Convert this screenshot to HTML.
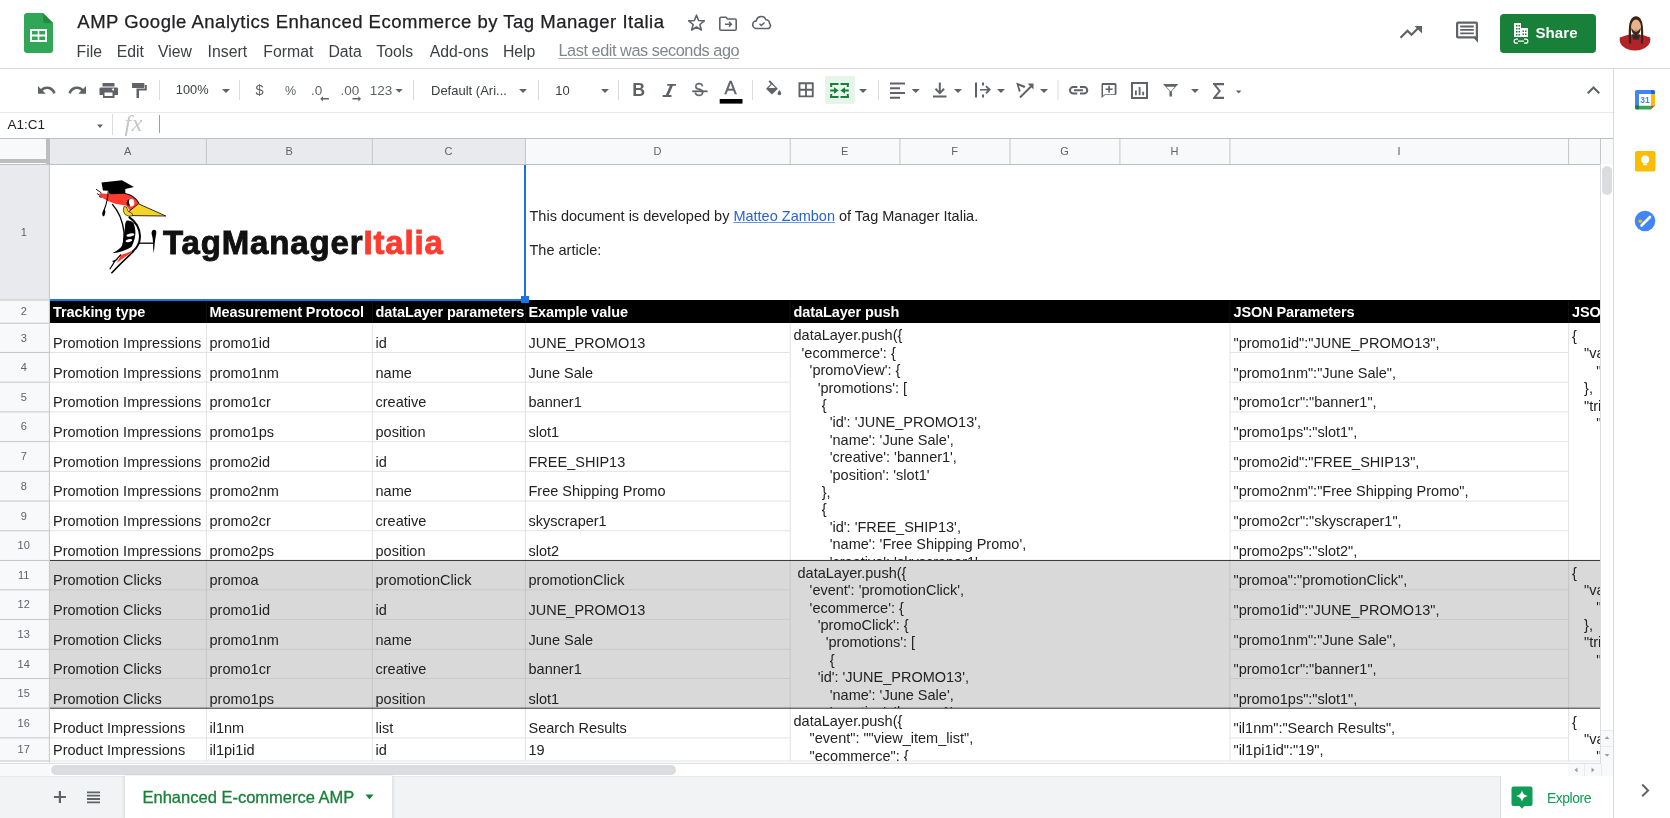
<!DOCTYPE html>
<html><head><meta charset="utf-8"><title>AMP Google Analytics Enhanced Ecommerce by Tag Manager Italia</title>
<style>
html,body{margin:0;padding:0}
body{width:1670px;height:818px;overflow:hidden;position:relative;background:#fff;font-family:"Liberation Sans",sans-serif}
.t{position:absolute;white-space:nowrap}
.c{}
</style></head><body>
<div style="position:absolute;left:0;top:0;width:1670px;height:818px;background:#fff;will-change:transform;overflow:hidden">
<svg style="position:absolute;left:24px;top:13px" width="29" height="40" viewBox="0 0 29 40">
<path d="M3 0H19L29 10V37A3 3 0 0 1 26 40H3A3 3 0 0 1 0 37V3A3 3 0 0 1 3 0Z" fill="#2fa756"/>
<path d="M19 0L29 10H21.5A2.5 2.5 0 0 1 19 7.5Z" fill="#1e8e3e"/>
<path d="M6 16H23V29H6Z" fill="#fff"/>
<path d="M8 18H13.7V21.5H8ZM15.3 18H21V21.5H15.3ZM8 23.5H13.7V27H8ZM15.3 23.5H21V27H15.3Z" fill="#2fa756"/>
</svg>
<div class="t" style="left:77.3px;top:12.84px;font-size:18.5px;line-height:18.5px;color:#202124;letter-spacing:0.5px;-webkit-text-stroke:0.25px #202124">AMP Google Analytics Enhanced Ecommerce by Tag Manager Italia</div>
<svg style="position:absolute;left:686px;top:12px" width="90" height="22" viewBox="0 0 90 22">
<path d="M10.5 3.2l2.1 5.3 5.7.4-4.4 3.6 1.4 5.5-4.8-3-4.8 3 1.4-5.5-4.4-3.6 5.7-.4z" fill="none" stroke="#5f6368" stroke-width="1.6" stroke-linejoin="round"/>
<path d="M35 5.2h5l1.6 1.8h7.4a1.2 1.2 0 0 1 1.2 1.2v8.8a1.2 1.2 0 0 1-1.2 1.2H35a1.2 1.2 0 0 1-1.2-1.2V6.4A1.2 1.2 0 0 1 35 5.2z" fill="none" stroke="#5f6368" stroke-width="1.6"/>
<path d="M39 12.2h6M43 9.8l2.4 2.4-2.4 2.4" fill="none" stroke="#5f6368" stroke-width="1.5"/>
<path d="M72.5 16.5h-1.8a3.8 3.8 0 0 1-.4-7.6 5 5 0 0 1 9.6-1.2 3.5 3.5 0 0 1 3.6 3.6 3.3 3.3 0 0 1-0.8 5.2z" fill="none" stroke="#5f6368" stroke-width="1.6" stroke-linejoin="round"/>
<path d="M73.5 11.8l1.8 1.8 3.2-3.2" fill="none" stroke="#5f6368" stroke-width="1.4"/>
</svg>
<div class="t" style="left:76.60000000000001px;top:43.63px;font-size:15.8px;line-height:15.8px;color:#3c4043">File</div>
<div class="t" style="left:116.7px;top:43.63px;font-size:15.8px;line-height:15.8px;color:#3c4043">Edit</div>
<div class="t" style="left:157.9px;top:43.63px;font-size:15.8px;line-height:15.8px;color:#3c4043">View</div>
<div class="t" style="left:207.6px;top:43.63px;font-size:15.8px;line-height:15.8px;color:#3c4043">Insert</div>
<div class="t" style="left:263.29999999999995px;top:43.63px;font-size:15.8px;line-height:15.8px;color:#3c4043">Format</div>
<div class="t" style="left:328.4px;top:43.63px;font-size:15.8px;line-height:15.8px;color:#3c4043">Data</div>
<div class="t" style="left:376.29999999999995px;top:43.63px;font-size:15.8px;line-height:15.8px;color:#3c4043">Tools</div>
<div class="t" style="left:429.7px;top:43.63px;font-size:15.8px;line-height:15.8px;color:#3c4043">Add-ons</div>
<div class="t" style="left:502.9px;top:43.63px;font-size:15.8px;line-height:15.8px;color:#3c4043">Help</div>
<div class="t" style="left:558.5px;top:42.20px;font-size:16.3px;line-height:16.3px;color:#80868b;letter-spacing:-0.45px;text-decoration:underline;text-decoration-color:#a9acb0;text-underline-offset:1.5px">Last edit was seconds ago</div>
<svg style="position:absolute;left:1396px;top:18px" width="90" height="28" viewBox="0 0 90 28">
<path d="M4.5 19.8l7-7 4 4 7-7" fill="none" stroke="#5f6368" stroke-width="2.2"/>
<path d="M18.5 8h7.5v7.5z" fill="#5f6368"/>
<path d="M62 3.5h18a2 2 0 0 1 2 2v19.3l-4-4.3H62a2 2 0 0 1-2-2v-13a2 2 0 0 1 2-2zM62.2 5.7v12.6h17.6V5.7z" fill="#5f6368" fill-rule="evenodd"/>
<path d="M64.2 8.5h13.6M64.2 11.9h13.6M64.2 15.3h13.6" stroke="#5f6368" stroke-width="1.8"/>
</svg>
<div style="position:absolute;left:1500px;top:14px;width:96px;height:39px;border-radius:4px;background:#188038"></div>
<svg style="position:absolute;left:1512px;top:22px" width="18" height="22" viewBox="0 0 18 22">
<path d="M2 1h7v5h7v9H2z" fill="#fff"/>
<path d="M4 3h1.5v1.5H4zM6.5 3H8v1.5H6.5zM4 6h1.5v1.5H4zM6.5 6H8v1.5H6.5zM4 9h1.5v1.5H4zM6.5 9H8v1.5H6.5zM10.5 8.5H12V10h-1.5zM13 8.5h1.5V10H13zM4 12h1.5v1.5H4zM6.5 12H8v1.5H6.5zM10.5 11.5H12V13h-1.5zM13 11.5h1.5V13H13z" fill="#188038"/>
<path d="M6 17.2H4.2a2 2 0 0 0 0 4H6M12 17.2h1.8a2 2 0 0 1 0 4H12M6 19.2h6" fill="none" stroke="#fff" stroke-width="1.3"/>
</svg>
<div class="t" style="left:1535.5px;top:24.80px;font-size:15px;line-height:15px;color:#fff;font-weight:bold;letter-spacing:0.1px">Share</div>
<svg style="position:absolute;left:1618px;top:16px" width="35" height="36" viewBox="0 0 35 36">
<path d="M1.8 21.5Q17 15 32.2 21.5Q33 26 30 29.5Q25 34.5 17 34.5Q9 34.5 4 29.5Q1 26 1.8 21.5z" fill="#b22226"/>
<path d="M14 18.5h8l-1.2 5h-5.6z" fill="#2b2b35"/>
<path d="M11 27.5Q10.2 14 11.5 7Q13.5 0 18 0.2Q22.5 0 24.3 7Q25.7 14 25 27.5L22.8 27.5Q23.5 16 22.5 10H13.5Q12.5 16 13.3 27.5z" fill="#3b2414"/>
<ellipse cx="18" cy="10.6" rx="4.9" ry="7" fill="#e6b38c"/>
<path d="M13.2 11.5Q13.6 18.8 18 19.2Q22.4 18.8 22.8 11.5Q21 15.2 18 15.2Q15 15.2 13.2 11.5z" fill="#3a2a1e"/>
<ellipse cx="18" cy="14.6" rx="2.1" ry="1.1" fill="#c98b7a"/>
</svg>
<div style="position:absolute;left:0;top:68px;width:1670px;height:1px;background:#dadce0"></div>
<svg style="position:absolute;left:0;top:69px" width="1613" height="43" viewBox="0 69 1613 43">
<g fill="#5f6368">
<!-- undo -->
<path d="M38 86v7.7h7.7l-2.9-2.9a6.2 6.2 0 0 1 10.3 2.9l2.5-.8a8.8 8.8 0 0 0-14.7-3.9z"/>
<!-- redo -->
<path d="M86 86v7.7h-7.7l2.9-2.9a6.2 6.2 0 0 0-10.3 2.9l-2.5-.8a8.8 8.8 0 0 1 14.7-3.9z"/>
<!-- print -->
<path d="M102.5 83h12v3.5h-12zM99.5 87.5h17.5a1 1 0 0 1 1 1v6.5h-3.5v3h-11.5v-3h-3.5v-6.5a1 1 0 0 1 1-1zM104.5 92.5v3.5h8v-3.5zM114 89.5a1 1 0 1 0 0 .01z"/>
<!-- paint format -->
<path d="M132 83h11.5a1 1 0 0 1 1 1v3a1 1 0 0 1-1 1H132zM145 85h1.8v5.5h-7.8v7.5h-2.5v-9.5h8.5z"/>
<!-- 100% triangle etc -->
<path d="M222 89h8l-4 4z"/>
<path d="M395.5 89h7.2l-3.6 3.8z"/>
<path d="M519 89h8l-4 4z"/>
<path d="M601 89h8l-4 4z"/>
<path d="M859 89h8l-4 4z"/>
<path d="M911.6 89h8.2l-4.1 4z"/>
<path d="M954 89h8l-4 4z"/>
<path d="M997 89h8l-4 4z"/>
<path d="M1040 89h8l-4 4z"/>
<path d="M1191 89h8l-4 4z"/>
<path d="M1236 90.4h5.4l-2.7 3.1z"/>
<!-- fill -->
<path d="M771.95 82.8l5.9 5.9-5.9 5.9-5.9-5.9z"/>
<path d="M769.2 81l3.2 3.2" stroke="#5f6368" stroke-width="1.9"/>
<path d="M768.5 88.1h6.9l-3.45-3.5z" fill="#fff"/>
<path d="M779.4 90.1q1.8 2.4 1.8 3.3a1.8 1.8 0 0 1-3.6 0q0-.9 1.8-3.3z"/>
<!-- borders -->
<path d="M798.5 82.3h15.2v15H798.5zM800.4 84.2v4.6h4.7v-4.6zM806.9 84.2v4.6h4.9v-4.6zM800.4 90.7v4.7h4.7v-4.7zM806.9 90.7v4.7h4.9v-4.7z" fill-rule="evenodd"/>
<!-- align left -->
<path d="M890 82.5h15v2h-15zM890 87.3h10v2h-10zM890 92.1h15v2h-15zM890 96.8h10v2h-10z"/>
<!-- valign bottom -->
<path d="M933 95.5h13.5v2H933zM938.8 82.5h2v8.2l2.6-2.6 1.4 1.4-5 5-5-5 1.4-1.4 2.6 2.6z"/>
<!-- wrap -->
<path d="M975 82.5h2v15h-2zM982 82.5h2v3h-2zM982 94.5h2v3h-2zM980 89h7.5l-2.2-2.2 1.3-1.3 4.3 4.3-4.3 4.3-1.3-1.3 2.2-2.2H980z"/>
<!-- rotate -->
<path d="M1016.2 82.5l9.2 3.6-1 1.8-5.6-2.1 1.9 5.3-1.8.9z"/>
<path d="M1020 97.5l11.5-11.5" stroke="#5f6368" stroke-width="2"/><path d="M1027.5 83.5h6v6z"/>
<!-- link -->
<path d="M1069 90.2a4.3 4.3 0 0 1 4.3-4.3h4v2h-4a2.3 2.3 0 0 0 0 4.6h4v2h-4a4.3 4.3 0 0 1-4.3-4.3zM1074 89.2h9v2h-9zM1080 85.9h4a4.3 4.3 0 0 1 0 8.6h-4v-2h4a2.3 2.3 0 0 0 0-4.6h-4z"/>
<!-- comment add -->
<path d="M1102.5 83h12.5a1.5 1.5 0 0 1 1.5 1.5v9a1.5 1.5 0 0 1-1.5 1.5h-10l-3.5 3.2V84.5a1.5 1.5 0 0 1 1-1.5zM1103 85v10.8l1.7-1.5h10V85z" fill-rule="evenodd"/>
<path d="M1108.3 85.8h1.6v2.7h2.7v1.6h-2.7v2.7h-1.6v-2.7h-2.7v-1.6h2.7z"/>
<!-- chart -->
<path d="M1131 82h17v17h-17zM1133 84v13h13V84z" fill-rule="evenodd"/>
<path d="M1135 90.5h1.8v4.7H1135zM1138.7 87h1.8v8.2h-1.8zM1142.3 91.8h1.8v3.4h-1.8z"/>
<!-- filter -->
<path d="M1163 84h15.3l-6.4 7v5.5h-2.4v-5.5z"/>
<path d="M1166.4 86.8h8.5l-4.25 4.6z" fill="#fff"/>
<!-- sigma -->
<path d="M1213 83h11v2.2h-7.8l4.8 5.8-4.8 5.8h7.8V99h-11v-1.2l5.5-6.8-5.5-6.8z"/>
<!-- chevron up -->
<path d="M1587 92.5l6.5-6.5 6.5 6.5-1.5 1.5-5-5-5 5z"/>
<!-- separators -->
</g>
<g fill="#dadce0">
<rect x="159" y="80" width="1" height="20"/><rect x="239" y="80" width="1" height="20"/><rect x="413" y="80" width="1" height="20"/>
<rect x="538" y="80" width="1" height="20"/><rect x="618" y="80" width="1" height="20"/><rect x="752" y="80" width="1" height="20"/>
<rect x="878" y="80" width="1" height="20"/><rect x="1057.5" y="80" width="1" height="20"/>
</g>
<!-- text color bar -->
<rect x="719.7" y="99" width="22.8" height="4.6" fill="#000"/>
<!-- merge highlighted -->
<rect x="825" y="76" width="30" height="28" rx="2" fill="#e6f4ea"/>
<g fill="#188038">
<rect x="830.2" y="83" width="8.3" height="2"/><rect x="830.2" y="83" width="2" height="4"/>
<rect x="840.5" y="83" width="8.3" height="2"/><rect x="846.8" y="83" width="2" height="4"/>
<rect x="830.2" y="96" width="8.3" height="2"/><rect x="830.2" y="94" width="2" height="4"/>
<rect x="840.5" y="96" width="8.3" height="2"/><rect x="846.8" y="94" width="2" height="4"/>
<rect x="830.2" y="89.5" width="4.5" height="2"/><path d="M834 87.2l4.6 3.3-4.6 3.3z"/>
<rect x="844.3" y="89.5" width="4.5" height="2"/><path d="M845 87.2l-4.6 3.3 4.6 3.3z"/>
</g>
</svg>
<div class="t" style="left:175.8px;top:83.86px;font-size:12.8px;line-height:12.8px;color:#3c4043">100%</div>
<div class="t" style="left:255.5px;top:82.93px;font-size:14.5px;line-height:14.5px;color:#5f6368">$</div>
<div class="t" style="left:285px;top:84.62px;font-size:12.5px;line-height:12.5px;color:#5f6368">%</div>
<div class="t" style="left:311px;top:83.77px;font-size:13.5px;line-height:13.5px;color:#5f6368">.0</div>
<div class="t" style="left:340.5px;top:83.77px;font-size:13.5px;line-height:13.5px;color:#5f6368">.00</div>
<svg style="position:absolute;left:310px;top:95px" width="55" height="7" viewBox="310 95 55 7"><g fill="#5f6368">
<path d="M320.3 98.8l2.6-2.6v1.8h6v1.6h-6v1.8z"/><path d="M361 98.8l-2.6-2.6v1.8h-6v1.6h6v1.8z"/></g></svg>
<div class="t" style="left:369.7px;top:83.57px;font-size:13.5px;line-height:13.5px;color:#5f6368">123</div>
<div class="t" style="left:431px;top:84.00px;font-size:13px;line-height:13px;color:#3c4043">Default (Ari...</div>
<div class="t" style="left:555.2px;top:84.00px;font-size:13px;line-height:13px;color:#3c4043">10</div>
<div class="t" style="left:632.2px;top:81.73px;font-size:17.8px;line-height:17.8px;color:#5f6368;font-weight:bold">B</div>
<svg style="position:absolute;left:655px;top:78px" width="90" height="28" viewBox="655 78 90 28"><g fill="#5f6368">
<path d="M667.2 83.9h8.8v1.9h-3.1l-4.1 9.3h2.7V97h-8.8v-1.9h3.1l4.1-9.3h-2.7z"/>
<rect x="692.2" y="90.4" width="15.4" height="1.8"/>
</g></svg>
<div class="t" style="left:694.2px;top:82.49px;font-size:17.5px;line-height:17.5px;color:#5f6368;transform:scaleX(0.86);transform-origin:0 0;-webkit-text-stroke:0.3px #5f6368">S</div>
<div class="t" style="left:724.4px;top:78.89px;font-size:18.2px;line-height:18.2px;color:#5f6368;-webkit-text-stroke:0.35px #5f6368">A</div>
<div style="position:absolute;left:0;top:112px;width:1613px;height:1px;background:#e8eaed"></div>
<div class="t" style="left:7.5px;top:118.27px;font-size:13.5px;line-height:13.5px;color:#202124">A1:C1</div>
<svg style="position:absolute;left:97px;top:124px" width="7" height="5" viewBox="0 0 7 5"><path d="M0 0.5h6l-3 3.5z" fill="#5f6368"/></svg>
<div style="position:absolute;left:112px;top:114px;width:1px;height:21px;background:#dadce0"></div>
<div class="t" style="left:124.5px;top:111.18px;font-size:24px;line-height:24px;color:#c4c7c5;font-family:Liberation Serif;font-style:italic;letter-spacing:0.5px">fx</div>
<div style="position:absolute;left:158.5px;top:115px;width:1.2px;height:18px;background:#9aa0a6"></div>
<div id="grid" style="position:absolute;left:0;top:0;width:1670px;height:818px">
<div style="position:absolute;left:0;top:138px;width:1613px;height:1px;background:#c0c0c0"></div>
<div style="position:absolute;left:50px;top:139px;width:1551px;height:25px;background:#f8f9fa"></div>
<div style="position:absolute;left:50px;top:139px;width:475.5px;height:25px;background:#e8eaed"></div>
<div style="position:absolute;left:0;top:139px;width:46px;height:20px;background:#f8f9fa"></div>
<div style="position:absolute;left:0;top:159px;width:46px;height:4px;background:#bdbdbd"></div>
<div style="position:absolute;left:46px;top:138px;width:4px;height:26px;background:#bdbdbd"></div>
<div style="position:absolute;left:0;top:164px;width:1601px;height:1px;background:#c0c0c0"></div>
<div style="position:absolute;left:1601px;top:139px;width:12px;height:25px;background:#f8f9fa"></div>
<svg style="position:absolute;left:0;top:0" width="1613" height="170" viewBox="0 0 1613 170"><rect x="205.90" y="139" width="1" height="25" fill="#c4c7c5"/><rect x="371.80" y="139" width="1" height="25" fill="#c4c7c5"/><rect x="524.90" y="139" width="1" height="25" fill="#c4c7c5"/><rect x="789.70" y="139" width="1" height="25" fill="#c4c7c5"/><rect x="899.40" y="139" width="1" height="25" fill="#c4c7c5"/><rect x="1009.50" y="139" width="1" height="25" fill="#c4c7c5"/><rect x="1119.40" y="139" width="1" height="25" fill="#c4c7c5"/><rect x="1229.40" y="139" width="1" height="25" fill="#c4c7c5"/><rect x="1568.10" y="139" width="1" height="25" fill="#c4c7c5"/><rect x="1600.00" y="139" width="1" height="25" fill="#c4c7c5"/></svg>
<div class="t" style="left:107.60000000000001px;width:40px;text-align:center;top:146.09px;font-size:11px;line-height:11px;color:#5f6368">A</div>
<div class="t" style="left:269.05px;width:40px;text-align:center;top:146.09px;font-size:11px;line-height:11px;color:#5f6368">B</div>
<div class="t" style="left:428.55px;width:40px;text-align:center;top:146.09px;font-size:11px;line-height:11px;color:#5f6368">C</div>
<div class="t" style="left:637.5px;width:40px;text-align:center;top:146.09px;font-size:11px;line-height:11px;color:#5f6368">D</div>
<div class="t" style="left:824.75px;width:40px;text-align:center;top:146.09px;font-size:11px;line-height:11px;color:#5f6368">E</div>
<div class="t" style="left:934.6500000000001px;width:40px;text-align:center;top:146.09px;font-size:11px;line-height:11px;color:#5f6368">F</div>
<div class="t" style="left:1044.65px;width:40px;text-align:center;top:146.09px;font-size:11px;line-height:11px;color:#5f6368">G</div>
<div class="t" style="left:1154.6000000000001px;width:40px;text-align:center;top:146.09px;font-size:11px;line-height:11px;color:#5f6368">H</div>
<div class="t" style="left:1378.95px;width:40px;text-align:center;top:146.09px;font-size:11px;line-height:11px;color:#5f6368">I</div>
<div style="position:absolute;left:0;top:165px;width:49.5px;height:596.3px;background:#f8f9fa"></div>
<div style="position:absolute;left:0;top:165px;width:49.5px;height:135px;background:#e8eaed"></div>
<div class="t" style="left:-0.8px;width:49px;text-align:center;top:227.19px;font-size:11px;line-height:11px;color:#5f6368">1</div>
<div class="t" style="left:-0.8px;width:49px;text-align:center;top:306.29px;font-size:11px;line-height:11px;color:#5f6368">2</div>
<div class="t" style="left:-0.8px;width:49px;text-align:center;top:332.51px;font-size:11px;line-height:11px;color:#5f6368">3</div>
<div class="t" style="left:-0.8px;width:49px;text-align:center;top:362.00px;font-size:11px;line-height:11px;color:#5f6368">4</div>
<div class="t" style="left:-0.8px;width:49px;text-align:center;top:391.72px;font-size:11px;line-height:11px;color:#5f6368">5</div>
<div class="t" style="left:-0.8px;width:49px;text-align:center;top:421.44px;font-size:11px;line-height:11px;color:#5f6368">6</div>
<div class="t" style="left:-0.8px;width:49px;text-align:center;top:451.16px;font-size:11px;line-height:11px;color:#5f6368">7</div>
<div class="t" style="left:-0.8px;width:49px;text-align:center;top:480.88px;font-size:11px;line-height:11px;color:#5f6368">8</div>
<div class="t" style="left:-0.8px;width:49px;text-align:center;top:510.60px;font-size:11px;line-height:11px;color:#5f6368">9</div>
<div class="t" style="left:-0.8px;width:49px;text-align:center;top:540.30px;font-size:11px;line-height:11px;color:#5f6368">10</div>
<div class="t" style="left:-0.8px;width:49px;text-align:center;top:569.81px;font-size:11px;line-height:11px;color:#5f6368">11</div>
<div class="t" style="left:-0.8px;width:49px;text-align:center;top:599.31px;font-size:11px;line-height:11px;color:#5f6368">12</div>
<div class="t" style="left:-0.8px;width:49px;text-align:center;top:629.06px;font-size:11px;line-height:11px;color:#5f6368">13</div>
<div class="t" style="left:-0.8px;width:49px;text-align:center;top:658.59px;font-size:11px;line-height:11px;color:#5f6368">14</div>
<div class="t" style="left:-0.8px;width:49px;text-align:center;top:688.04px;font-size:11px;line-height:11px;color:#5f6368">15</div>
<div class="t" style="left:-0.8px;width:49px;text-align:center;top:717.74px;font-size:11px;line-height:11px;color:#5f6368">16</div>
<div class="t" style="left:-0.8px;width:49px;text-align:center;top:744.14px;font-size:11px;line-height:11px;color:#5f6368">17</div>
<div style="position:absolute;left:50px;top:165px;width:1551px;height:596.3px;background:#fff"></div>
<div style="position:absolute;left:50px;top:300px;width:1550px;height:23px;background:#000"></div>
<div style="position:absolute;left:50px;top:561px;width:1550px;height:147px;background:#d9d9d9"></div>
<svg style="position:absolute;left:0;top:0" width="1613" height="818" viewBox="0 0 1613 818"><rect x="50" y="351.95" width="740.20" height="1" fill="#e2e3e3"/><rect x="1229.9" y="351.95" width="338.70" height="1" fill="#e2e3e3"/><rect x="50" y="381.67" width="740.20" height="1" fill="#e2e3e3"/><rect x="1229.9" y="381.67" width="338.70" height="1" fill="#e2e3e3"/><rect x="50" y="411.39" width="740.20" height="1" fill="#e2e3e3"/><rect x="1229.9" y="411.39" width="338.70" height="1" fill="#e2e3e3"/><rect x="50" y="441.11" width="740.20" height="1" fill="#e2e3e3"/><rect x="1229.9" y="441.11" width="338.70" height="1" fill="#e2e3e3"/><rect x="50" y="470.83" width="740.20" height="1" fill="#e2e3e3"/><rect x="1229.9" y="470.83" width="338.70" height="1" fill="#e2e3e3"/><rect x="50" y="500.55" width="740.20" height="1" fill="#e2e3e3"/><rect x="1229.9" y="500.55" width="338.70" height="1" fill="#e2e3e3"/><rect x="50" y="530.27" width="740.20" height="1" fill="#e2e3e3"/><rect x="1229.9" y="530.27" width="338.70" height="1" fill="#e2e3e3"/><rect x="50" y="589.30" width="740.20" height="1" fill="#c9c9c9"/><rect x="1229.9" y="589.30" width="338.70" height="1" fill="#c9c9c9"/><rect x="50" y="618.95" width="740.20" height="1" fill="#c9c9c9"/><rect x="1229.9" y="618.95" width="338.70" height="1" fill="#c9c9c9"/><rect x="50" y="648.80" width="740.20" height="1" fill="#c9c9c9"/><rect x="1229.9" y="648.80" width="338.70" height="1" fill="#c9c9c9"/><rect x="50" y="678.00" width="740.20" height="1" fill="#c9c9c9"/><rect x="1229.9" y="678.00" width="338.70" height="1" fill="#c9c9c9"/><rect x="50" y="737.40" width="740.20" height="1" fill="#e2e3e3"/><rect x="1229.9" y="737.40" width="338.70" height="1" fill="#e2e3e3"/><rect x="50" y="760.5" width="1551" height="1" fill="#e2e3e3"/><rect x="205.90" y="323.2" width="1" height="237.25" fill="#e2e3e3"/><rect x="205.90" y="560.45" width="1" height="147.75" fill="#c6c6c6"/><rect x="205.90" y="708.2" width="1" height="52.80" fill="#e2e3e3"/><rect x="205.90" y="301" width="1" height="22" fill="#111"/><rect x="371.80" y="323.2" width="1" height="237.25" fill="#e2e3e3"/><rect x="371.80" y="560.45" width="1" height="147.75" fill="#c6c6c6"/><rect x="371.80" y="708.2" width="1" height="52.80" fill="#e2e3e3"/><rect x="371.80" y="301" width="1" height="22" fill="#111"/><rect x="524.90" y="323.2" width="1" height="237.25" fill="#e2e3e3"/><rect x="524.90" y="560.45" width="1" height="147.75" fill="#c6c6c6"/><rect x="524.90" y="708.2" width="1" height="52.80" fill="#e2e3e3"/><rect x="524.90" y="301" width="1" height="22" fill="#111"/><rect x="789.70" y="323.2" width="1" height="237.25" fill="#e2e3e3"/><rect x="789.70" y="560.45" width="1" height="147.75" fill="#c6c6c6"/><rect x="789.70" y="708.2" width="1" height="52.80" fill="#e2e3e3"/><rect x="789.70" y="301" width="1" height="22" fill="#111"/><rect x="1229.40" y="323.2" width="1" height="237.25" fill="#e2e3e3"/><rect x="1229.40" y="560.45" width="1" height="147.75" fill="#c6c6c6"/><rect x="1229.40" y="708.2" width="1" height="52.80" fill="#e2e3e3"/><rect x="1229.40" y="301" width="1" height="22" fill="#111"/><rect x="1568.10" y="323.2" width="1" height="237.25" fill="#e2e3e3"/><rect x="1568.10" y="560.45" width="1" height="147.75" fill="#c6c6c6"/><rect x="1568.10" y="708.2" width="1" height="52.80" fill="#e2e3e3"/><rect x="1568.10" y="301" width="1" height="22" fill="#111"/><rect x="50" y="559.95" width="1550" height="1" fill="#333"/><rect x="50" y="707.7" width="1550" height="1" fill="#333"/><rect x="0" y="299.50" width="49.4" height="1" fill="#c4c7c5"/><rect x="0" y="322.70" width="49.4" height="1" fill="#c4c7c5"/><rect x="0" y="351.95" width="49.4" height="1" fill="#c4c7c5"/><rect x="0" y="381.67" width="49.4" height="1" fill="#c4c7c5"/><rect x="0" y="411.39" width="49.4" height="1" fill="#c4c7c5"/><rect x="0" y="441.11" width="49.4" height="1" fill="#c4c7c5"/><rect x="0" y="470.83" width="49.4" height="1" fill="#c4c7c5"/><rect x="0" y="500.55" width="49.4" height="1" fill="#c4c7c5"/><rect x="0" y="530.27" width="49.4" height="1" fill="#c4c7c5"/><rect x="0" y="559.95" width="49.4" height="1" fill="#c4c7c5"/><rect x="0" y="589.30" width="49.4" height="1" fill="#c4c7c5"/><rect x="0" y="618.95" width="49.4" height="1" fill="#c4c7c5"/><rect x="0" y="648.80" width="49.4" height="1" fill="#c4c7c5"/><rect x="0" y="678.00" width="49.4" height="1" fill="#c4c7c5"/><rect x="0" y="707.70" width="49.4" height="1" fill="#c4c7c5"/><rect x="0" y="737.40" width="49.4" height="1" fill="#c4c7c5"/><rect x="0" y="760.50" width="49.4" height="1" fill="#c4c7c5"/><rect x="48.9" y="164.5" width="1" height="598" fill="#c4c7c5"/><rect x="0" y="762.85" width="1613" height="1" fill="#dadce0"/></svg>
<div style="position:absolute;left:50px;top:301px;width:156.5px;height:22px;overflow:hidden"><div class="t c" style="left:3.0px;top:4.13px;font-size:14.5px;line-height:14.5px;color:#fff;font-weight:bold;white-space:pre;letter-spacing:-0.1px">Tracking type</div></div>
<div style="position:absolute;left:206.5px;top:301px;width:166.0px;height:22px;overflow:hidden"><div class="t c" style="left:3.0px;top:4.13px;font-size:14.5px;line-height:14.5px;color:#fff;font-weight:bold;white-space:pre;letter-spacing:-0.1px">Measurement Protocol</div></div>
<div style="position:absolute;left:372.5px;top:301px;width:153.0px;height:22px;overflow:hidden"><div class="t c" style="left:3.0px;top:4.13px;font-size:14.5px;line-height:14.5px;color:#fff;font-weight:bold;white-space:pre;letter-spacing:-0.1px">dataLayer parameters</div></div>
<div style="position:absolute;left:525.5px;top:301px;width:265.0px;height:22px;overflow:hidden"><div class="t c" style="left:3.0px;top:4.13px;font-size:14.5px;line-height:14.5px;color:#fff;font-weight:bold;white-space:pre;letter-spacing:-0.1px">Example value</div></div>
<div style="position:absolute;left:790.5px;top:301px;width:442px;height:22px;overflow:hidden"><div class="t c" style="left:3.0px;top:4.13px;font-size:14.5px;line-height:14.5px;color:#fff;font-weight:bold;white-space:pre;letter-spacing:-0.1px">dataLayer push</div></div>
<div style="position:absolute;left:1230.5px;top:301px;width:338.5px;height:22px;overflow:hidden"><div class="t c" style="left:3.0px;top:4.13px;font-size:14.5px;line-height:14.5px;color:#fff;font-weight:bold;white-space:pre;letter-spacing:-0.1px">JSON Parameters</div></div>
<div style="position:absolute;left:1569px;top:301px;width:32px;height:22px;overflow:hidden"><div class="t c" style="left:3.0px;top:4.13px;font-size:14.5px;line-height:14.5px;color:#fff;font-weight:bold;white-space:pre;letter-spacing:-0.1px">JSO</div></div>
<div class="t c" style="left:53px;top:335.78px;font-size:14.5px;line-height:14.5px;color:#222;white-space:pre;">Promotion Impressions</div>
<div class="t c" style="left:209.5px;top:335.78px;font-size:14.5px;line-height:14.5px;color:#222;white-space:pre;">promo1id</div>
<div class="t c" style="left:375.5px;top:335.78px;font-size:14.5px;line-height:14.5px;color:#222;white-space:pre;">id</div>
<div class="t c" style="left:528.5px;top:335.78px;font-size:14.5px;line-height:14.5px;color:#222;white-space:pre;">JUNE_PROMO13</div>
<div class="t c" style="left:1233.5px;top:335.78px;font-size:14.5px;line-height:14.5px;color:#222;white-space:pre;">"promo1id":"JUNE_PROMO13",</div>
<div class="t c" style="left:53px;top:365.50px;font-size:14.5px;line-height:14.5px;color:#222;white-space:pre;">Promotion Impressions</div>
<div class="t c" style="left:209.5px;top:365.50px;font-size:14.5px;line-height:14.5px;color:#222;white-space:pre;">promo1nm</div>
<div class="t c" style="left:375.5px;top:365.50px;font-size:14.5px;line-height:14.5px;color:#222;white-space:pre;">name</div>
<div class="t c" style="left:528.5px;top:365.50px;font-size:14.5px;line-height:14.5px;color:#222;white-space:pre;">June Sale</div>
<div class="t c" style="left:1233.5px;top:365.50px;font-size:14.5px;line-height:14.5px;color:#222;white-space:pre;">"promo1nm":"June Sale",</div>
<div class="t c" style="left:53px;top:395.22px;font-size:14.5px;line-height:14.5px;color:#222;white-space:pre;">Promotion Impressions</div>
<div class="t c" style="left:209.5px;top:395.22px;font-size:14.5px;line-height:14.5px;color:#222;white-space:pre;">promo1cr</div>
<div class="t c" style="left:375.5px;top:395.22px;font-size:14.5px;line-height:14.5px;color:#222;white-space:pre;">creative</div>
<div class="t c" style="left:528.5px;top:395.22px;font-size:14.5px;line-height:14.5px;color:#222;white-space:pre;">banner1</div>
<div class="t c" style="left:1233.5px;top:395.22px;font-size:14.5px;line-height:14.5px;color:#222;white-space:pre;">"promo1cr":"banner1",</div>
<div class="t c" style="left:53px;top:424.94px;font-size:14.5px;line-height:14.5px;color:#222;white-space:pre;">Promotion Impressions</div>
<div class="t c" style="left:209.5px;top:424.94px;font-size:14.5px;line-height:14.5px;color:#222;white-space:pre;">promo1ps</div>
<div class="t c" style="left:375.5px;top:424.94px;font-size:14.5px;line-height:14.5px;color:#222;white-space:pre;">position</div>
<div class="t c" style="left:528.5px;top:424.94px;font-size:14.5px;line-height:14.5px;color:#222;white-space:pre;">slot1</div>
<div class="t c" style="left:1233.5px;top:424.94px;font-size:14.5px;line-height:14.5px;color:#222;white-space:pre;">"promo1ps":"slot1",</div>
<div class="t c" style="left:53px;top:454.66px;font-size:14.5px;line-height:14.5px;color:#222;white-space:pre;">Promotion Impressions</div>
<div class="t c" style="left:209.5px;top:454.66px;font-size:14.5px;line-height:14.5px;color:#222;white-space:pre;">promo2id</div>
<div class="t c" style="left:375.5px;top:454.66px;font-size:14.5px;line-height:14.5px;color:#222;white-space:pre;">id</div>
<div class="t c" style="left:528.5px;top:454.66px;font-size:14.5px;line-height:14.5px;color:#222;white-space:pre;">FREE_SHIP13</div>
<div class="t c" style="left:1233.5px;top:454.66px;font-size:14.5px;line-height:14.5px;color:#222;white-space:pre;">"promo2id":"FREE_SHIP13",</div>
<div class="t c" style="left:53px;top:484.38px;font-size:14.5px;line-height:14.5px;color:#222;white-space:pre;">Promotion Impressions</div>
<div class="t c" style="left:209.5px;top:484.38px;font-size:14.5px;line-height:14.5px;color:#222;white-space:pre;">promo2nm</div>
<div class="t c" style="left:375.5px;top:484.38px;font-size:14.5px;line-height:14.5px;color:#222;white-space:pre;">name</div>
<div class="t c" style="left:528.5px;top:484.38px;font-size:14.5px;line-height:14.5px;color:#222;white-space:pre;">Free Shipping Promo</div>
<div class="t c" style="left:1233.5px;top:484.38px;font-size:14.5px;line-height:14.5px;color:#222;white-space:pre;">"promo2nm":"Free Shipping Promo",</div>
<div class="t c" style="left:53px;top:514.10px;font-size:14.5px;line-height:14.5px;color:#222;white-space:pre;">Promotion Impressions</div>
<div class="t c" style="left:209.5px;top:514.10px;font-size:14.5px;line-height:14.5px;color:#222;white-space:pre;">promo2cr</div>
<div class="t c" style="left:375.5px;top:514.10px;font-size:14.5px;line-height:14.5px;color:#222;white-space:pre;">creative</div>
<div class="t c" style="left:528.5px;top:514.10px;font-size:14.5px;line-height:14.5px;color:#222;white-space:pre;">skyscraper1</div>
<div class="t c" style="left:1233.5px;top:514.10px;font-size:14.5px;line-height:14.5px;color:#222;white-space:pre;">"promo2cr":"skyscraper1",</div>
<div class="t c" style="left:53px;top:543.78px;font-size:14.5px;line-height:14.5px;color:#222;white-space:pre;">Promotion Impressions</div>
<div class="t c" style="left:209.5px;top:543.78px;font-size:14.5px;line-height:14.5px;color:#222;white-space:pre;">promo2ps</div>
<div class="t c" style="left:375.5px;top:543.78px;font-size:14.5px;line-height:14.5px;color:#222;white-space:pre;">position</div>
<div class="t c" style="left:528.5px;top:543.78px;font-size:14.5px;line-height:14.5px;color:#222;white-space:pre;">slot2</div>
<div class="t c" style="left:1233.5px;top:543.78px;font-size:14.5px;line-height:14.5px;color:#222;white-space:pre;">"promo2ps":"slot2",</div>
<div class="t c" style="left:53px;top:573.13px;font-size:14.5px;line-height:14.5px;color:#222;white-space:pre;">Promotion Clicks</div>
<div class="t c" style="left:209.5px;top:573.13px;font-size:14.5px;line-height:14.5px;color:#222;white-space:pre;">promoa</div>
<div class="t c" style="left:375.5px;top:573.13px;font-size:14.5px;line-height:14.5px;color:#222;white-space:pre;">promotionClick</div>
<div class="t c" style="left:528.5px;top:573.13px;font-size:14.5px;line-height:14.5px;color:#222;white-space:pre;">promotionClick</div>
<div class="t c" style="left:1233.5px;top:573.13px;font-size:14.5px;line-height:14.5px;color:#222;white-space:pre;">"promoa":"promotionClick",</div>
<div class="t c" style="left:53px;top:602.78px;font-size:14.5px;line-height:14.5px;color:#222;white-space:pre;">Promotion Clicks</div>
<div class="t c" style="left:209.5px;top:602.78px;font-size:14.5px;line-height:14.5px;color:#222;white-space:pre;">promo1id</div>
<div class="t c" style="left:375.5px;top:602.78px;font-size:14.5px;line-height:14.5px;color:#222;white-space:pre;">id</div>
<div class="t c" style="left:528.5px;top:602.78px;font-size:14.5px;line-height:14.5px;color:#222;white-space:pre;">JUNE_PROMO13</div>
<div class="t c" style="left:1233.5px;top:602.78px;font-size:14.5px;line-height:14.5px;color:#222;white-space:pre;">"promo1id":"JUNE_PROMO13",</div>
<div class="t c" style="left:53px;top:632.63px;font-size:14.5px;line-height:14.5px;color:#222;white-space:pre;">Promotion Clicks</div>
<div class="t c" style="left:209.5px;top:632.63px;font-size:14.5px;line-height:14.5px;color:#222;white-space:pre;">promo1nm</div>
<div class="t c" style="left:375.5px;top:632.63px;font-size:14.5px;line-height:14.5px;color:#222;white-space:pre;">name</div>
<div class="t c" style="left:528.5px;top:632.63px;font-size:14.5px;line-height:14.5px;color:#222;white-space:pre;">June Sale</div>
<div class="t c" style="left:1233.5px;top:632.63px;font-size:14.5px;line-height:14.5px;color:#222;white-space:pre;">"promo1nm":"June Sale",</div>
<div class="t c" style="left:53px;top:661.83px;font-size:14.5px;line-height:14.5px;color:#222;white-space:pre;">Promotion Clicks</div>
<div class="t c" style="left:209.5px;top:661.83px;font-size:14.5px;line-height:14.5px;color:#222;white-space:pre;">promo1cr</div>
<div class="t c" style="left:375.5px;top:661.83px;font-size:14.5px;line-height:14.5px;color:#222;white-space:pre;">creative</div>
<div class="t c" style="left:528.5px;top:661.83px;font-size:14.5px;line-height:14.5px;color:#222;white-space:pre;">banner1</div>
<div class="t c" style="left:1233.5px;top:661.83px;font-size:14.5px;line-height:14.5px;color:#222;white-space:pre;">"promo1cr":"banner1",</div>
<div class="t c" style="left:53px;top:691.53px;font-size:14.5px;line-height:14.5px;color:#222;white-space:pre;">Promotion Clicks</div>
<div class="t c" style="left:209.5px;top:691.53px;font-size:14.5px;line-height:14.5px;color:#222;white-space:pre;">promo1ps</div>
<div class="t c" style="left:375.5px;top:691.53px;font-size:14.5px;line-height:14.5px;color:#222;white-space:pre;">position</div>
<div class="t c" style="left:528.5px;top:691.53px;font-size:14.5px;line-height:14.5px;color:#222;white-space:pre;">slot1</div>
<div class="t c" style="left:1233.5px;top:691.53px;font-size:14.5px;line-height:14.5px;color:#222;white-space:pre;">"promo1ps":"slot1",</div>
<div class="t c" style="left:53px;top:721.23px;font-size:14.5px;line-height:14.5px;color:#222;white-space:pre;">Product Impressions</div>
<div class="t c" style="left:209.5px;top:721.23px;font-size:14.5px;line-height:14.5px;color:#222;white-space:pre;">il1nm</div>
<div class="t c" style="left:375.5px;top:721.23px;font-size:14.5px;line-height:14.5px;color:#222;white-space:pre;">list</div>
<div class="t c" style="left:528.5px;top:721.23px;font-size:14.5px;line-height:14.5px;color:#222;white-space:pre;">Search Results</div>
<div class="t c" style="left:1233.5px;top:721.23px;font-size:14.5px;line-height:14.5px;color:#222;white-space:pre;">"il1nm":"Search Results",</div>
<div class="t c" style="left:53px;top:742.73px;font-size:14.5px;line-height:14.5px;color:#222;white-space:pre;">Product Impressions</div>
<div class="t c" style="left:209.5px;top:742.73px;font-size:14.5px;line-height:14.5px;color:#222;white-space:pre;">il1pi1id</div>
<div class="t c" style="left:375.5px;top:742.73px;font-size:14.5px;line-height:14.5px;color:#222;white-space:pre;">id</div>
<div class="t c" style="left:528.5px;top:742.73px;font-size:14.5px;line-height:14.5px;color:#222;white-space:pre;">19</div>
<div class="t c" style="left:1233.5px;top:742.73px;font-size:14.5px;line-height:14.5px;color:#222;white-space:pre;">"il1pi1id":"19",</div>
<div style="position:absolute;left:790.5px;top:324px;width:439px;height:236px;overflow:hidden"><div class="t c" style="left:3px;top:4.33px;font-size:14.5px;line-height:14.5px;color:#222;white-space:pre">dataLayer.push({</div><div class="t c" style="left:3px;top:21.73px;font-size:14.5px;line-height:14.5px;color:#222;white-space:pre">  'ecommerce': {</div><div class="t c" style="left:3px;top:39.13px;font-size:14.5px;line-height:14.5px;color:#222;white-space:pre">    'promoView': {</div><div class="t c" style="left:3px;top:56.53px;font-size:14.5px;line-height:14.5px;color:#222;white-space:pre">      'promotions': [</div><div class="t c" style="left:3px;top:73.93px;font-size:14.5px;line-height:14.5px;color:#222;white-space:pre">       {</div><div class="t c" style="left:3px;top:91.33px;font-size:14.5px;line-height:14.5px;color:#222;white-space:pre">         'id': 'JUNE_PROMO13',</div><div class="t c" style="left:3px;top:108.73px;font-size:14.5px;line-height:14.5px;color:#222;white-space:pre">         'name': 'June Sale',</div><div class="t c" style="left:3px;top:126.13px;font-size:14.5px;line-height:14.5px;color:#222;white-space:pre">         'creative': 'banner1',</div><div class="t c" style="left:3px;top:143.53px;font-size:14.5px;line-height:14.5px;color:#222;white-space:pre">         'position': 'slot1'</div><div class="t c" style="left:3px;top:160.93px;font-size:14.5px;line-height:14.5px;color:#222;white-space:pre">       },</div><div class="t c" style="left:3px;top:178.33px;font-size:14.5px;line-height:14.5px;color:#222;white-space:pre">       {</div><div class="t c" style="left:3px;top:195.73px;font-size:14.5px;line-height:14.5px;color:#222;white-space:pre">         'id': 'FREE_SHIP13',</div><div class="t c" style="left:3px;top:213.13px;font-size:14.5px;line-height:14.5px;color:#222;white-space:pre">         'name': 'Free Shipping Promo',</div><div class="t c" style="left:3px;top:230.53px;font-size:14.5px;line-height:14.5px;color:#222;white-space:pre">         'creative': 'skyscraper1',</div></div>
<div style="position:absolute;left:790.5px;top:561.2px;width:439px;height:146.79999999999995px;overflow:hidden"><div class="t c" style="left:3px;top:4.53px;font-size:14.5px;line-height:14.5px;color:#222;white-space:pre"> dataLayer.push({</div><div class="t c" style="left:3px;top:21.93px;font-size:14.5px;line-height:14.5px;color:#222;white-space:pre">    'event': 'promotionClick',</div><div class="t c" style="left:3px;top:39.33px;font-size:14.5px;line-height:14.5px;color:#222;white-space:pre">    'ecommerce': {</div><div class="t c" style="left:3px;top:56.73px;font-size:14.5px;line-height:14.5px;color:#222;white-space:pre">      'promoClick': {</div><div class="t c" style="left:3px;top:74.13px;font-size:14.5px;line-height:14.5px;color:#222;white-space:pre">        'promotions': [</div><div class="t c" style="left:3px;top:91.53px;font-size:14.5px;line-height:14.5px;color:#222;white-space:pre">         {</div><div class="t c" style="left:3px;top:108.93px;font-size:14.5px;line-height:14.5px;color:#222;white-space:pre">      'id': 'JUNE_PROMO13',</div><div class="t c" style="left:3px;top:126.33px;font-size:14.5px;line-height:14.5px;color:#222;white-space:pre">         'name': 'June Sale',</div><div class="t c" style="left:3px;top:143.73px;font-size:14.5px;line-height:14.5px;color:#222;white-space:pre">         'creative': 'banner1',</div></div>
<div style="position:absolute;left:790.5px;top:709.2px;width:439px;height:51.799999999999955px;overflow:hidden"><div class="t c" style="left:3px;top:4.83px;font-size:14.5px;line-height:14.5px;color:#222;white-space:pre">dataLayer.push({</div><div class="t c" style="left:3px;top:22.23px;font-size:14.5px;line-height:14.5px;color:#222;white-space:pre">    "event": ""view_item_list",</div><div class="t c" style="left:3px;top:39.63px;font-size:14.5px;line-height:14.5px;color:#222;white-space:pre">    "ecommerce": {</div><div class="t c" style="left:3px;top:57.03px;font-size:14.5px;line-height:14.5px;color:#222;white-space:pre">      "items": [</div></div>
<div style="position:absolute;left:1569px;top:324px;width:31.5px;height:236px;overflow:hidden"><div class="t c" style="left:3px;top:4.93px;font-size:14.5px;line-height:14.5px;color:#222;white-space:pre">{</div><div class="t c" style="left:3px;top:22.33px;font-size:14.5px;line-height:14.5px;color:#222;white-space:pre">   "vars": {</div><div class="t c" style="left:3px;top:39.73px;font-size:14.5px;line-height:14.5px;color:#222;white-space:pre">      "event": "promotionView"</div><div class="t c" style="left:3px;top:57.13px;font-size:14.5px;line-height:14.5px;color:#222;white-space:pre">   },</div><div class="t c" style="left:3px;top:74.53px;font-size:14.5px;line-height:14.5px;color:#222;white-space:pre">   "triggers": {</div><div class="t c" style="left:3px;top:91.93px;font-size:14.5px;line-height:14.5px;color:#222;white-space:pre">      "promoView": {</div></div>
<div style="position:absolute;left:1569px;top:561.2px;width:31.5px;height:146.79999999999995px;overflow:hidden"><div class="t c" style="left:3px;top:4.33px;font-size:14.5px;line-height:14.5px;color:#222;white-space:pre">{</div><div class="t c" style="left:3px;top:21.73px;font-size:14.5px;line-height:14.5px;color:#222;white-space:pre">   "vars": {</div><div class="t c" style="left:3px;top:39.13px;font-size:14.5px;line-height:14.5px;color:#222;white-space:pre">      "event": "promotionView"</div><div class="t c" style="left:3px;top:56.53px;font-size:14.5px;line-height:14.5px;color:#222;white-space:pre">   },</div><div class="t c" style="left:3px;top:73.93px;font-size:14.5px;line-height:14.5px;color:#222;white-space:pre">   "triggers": {</div><div class="t c" style="left:3px;top:91.33px;font-size:14.5px;line-height:14.5px;color:#222;white-space:pre">      "promoView": {</div></div>
<div style="position:absolute;left:1569px;top:709.2px;width:31.5px;height:51.799999999999955px;overflow:hidden"><div class="t c" style="left:3px;top:5.43px;font-size:14.5px;line-height:14.5px;color:#222;white-space:pre">{</div><div class="t c" style="left:3px;top:22.83px;font-size:14.5px;line-height:14.5px;color:#222;white-space:pre">   "vars": {</div><div class="t c" style="left:3px;top:40.23px;font-size:14.5px;line-height:14.5px;color:#222;white-space:pre">      "event": "promotionView"</div><div class="t c" style="left:3px;top:57.63px;font-size:14.5px;line-height:14.5px;color:#222;white-space:pre">   },</div><div class="t c" style="left:3px;top:75.03px;font-size:14.5px;line-height:14.5px;color:#222;white-space:pre">   "triggers": {</div><div class="t c" style="left:3px;top:92.43px;font-size:14.5px;line-height:14.5px;color:#222;white-space:pre">      "promoView": {</div></div>
<div class="t c" style="left:529.5px;top:208.63px;font-size:14.5px;line-height:14.5px;color:#222;white-space:pre">This document is developed by <span style="color:#2563d4;text-decoration:underline;text-decoration-color:#6e97e3;text-underline-offset:1px">Matteo Zambon</span> of Tag Manager Italia.</div>
<div class="t c" style="left:529.5px;top:243.33px;font-size:14.5px;line-height:14.5px;color:#222;white-space:pre">The article:</div>
<div style="position:absolute;left:524px;top:165px;width:2px;height:136px;background:#1a73e8"></div>
<div style="position:absolute;left:50px;top:299px;width:476px;height:2px;background:#1a73e8"></div>
<div style="position:absolute;left:521px;top:295.5px;width:7.5px;height:7.5px;background:#1a73e8"></div>
</div>
<svg style="position:absolute;left:90px;top:175px" width="360" height="102" viewBox="90 175 360 102">
<!-- cap -->
<path d="M101.5 182.4L122 180.3 133.9 187 125.3 189.1 125.3 193.7 122.6 195.6 112.2 195.6 109.1 193.4 108.5 190.7 103 190.4z" fill="#000"/>
<!-- head red -->
<path d="M99.5 193.2L112 194.3 125 193.7Q134 195 139 203.5L131.5 212.5 126 205.5Q118 204.8 114.6 203.6Q108 201.8 100.6 196.8Z" fill="#ff3b2f"/>
<path d="M125 193.5Q134.5 195 139.2 203.6" stroke="#000" stroke-width="1.1" fill="none"/>
<!-- beak -->
<path d="M138.5 203.8L165.8 216 131 215.6 127 213z" fill="#f5d327" stroke="#000" stroke-width="0.8" stroke-linejoin="round"/>
<path d="M124 206.5Q122 211 125 214.5Q129 217.5 133 215.5L131.5 213Q127 212 126.5 207z" fill="#f5d327" stroke="#000" stroke-width="0.6"/>
<!-- eye -->
<ellipse cx="131.3" cy="202.8" rx="3" ry="3.8" fill="#fff"/>
<path d="M129.2 199Q126.2 201 126.6 204.2Q127.6 206.3 130.2 205.6Q128.2 203 129.2 199z" fill="#000"/>
<!-- tassel -->
<path d="M108.3 190.8Q107.5 202 104.3 209.5" stroke="#000" stroke-width="1.1" fill="none"/>
<path d="M104.2 208.2Q106.6 211.5 104 216.5Q100.3 215.5 104.2 208.2z" fill="#000"/>
<path d="M96 189.2L101.5 193M97 193.5L100.5 195.8M99 196.5L101.5 197.5" stroke="#000" stroke-width="0.9"/>
<!-- body outline left -->
<path d="M112.2 204.1Q122 215 124 232Q124.5 243 121.7 248.6" stroke="#000" stroke-width="1.4" fill="none"/>
<!-- body outline right -->
<path d="M128.8 216.8Q139.5 224 140 236Q140 246 132 252" stroke="#000" stroke-width="2" fill="none"/>
<!-- wing -->
<path d="M126.5 220.7Q131 220 133.6 223.1Q136 230 135.2 235.8Q134 243 131.2 247Q124 252 112.2 253.3Q120 249 122.5 245.4Q124 237 124.9 227.9Q125 222 126.5 220.7z" fill="#000"/>
<ellipse cx="130.4" cy="235" rx="4" ry="1.5" fill="#fff" transform="rotate(-10 130.4 235)"/>
<ellipse cx="128.9" cy="240.6" rx="3.3" ry="1.4" fill="#fff" transform="rotate(-15 128.9 240.6)"/>
<!-- red tail -->
<path d="M133.6 250.2Q126 253.5 120.9 254.9L116.9 262.9Q122 259 125.7 256.5Q130.5 253.5 133.6 250.2z" fill="#ff3b2f"/>
<path d="M134 251Q122 262 111.4 273.2" stroke="#000" stroke-width="1.6" fill="none"/>
<path d="M121 254.5Q114 261 109.8 269.2M117.5 259.5L112.5 261.5" stroke="#000" stroke-width="1.1" fill="none"/>
<!-- perch -->
<path d="M138.9 243.2H153.6" stroke="#000" stroke-width="1.3"/>
<path d="M154.3 229.8q2.2.3 2 3.5q-.8 4-1.6 10q-.3 5-1 10q-.8-5-.6-10q0-5-1.6-10q.2-3.5 2.8-3.5z" fill="#000"/>
<!-- text -->
<text x="163" y="254.2" font-family="Liberation Sans" font-weight="bold" font-size="33" letter-spacing="0.85" fill="#111" stroke="#111" stroke-width="0.9">TagManager<tspan fill="#ff3b2f" stroke="#ff3b2f">Italia</tspan></text>
</svg>
<div style="position:absolute;left:1601px;top:165px;width:12px;height:598px;background:#fff"></div>
<div style="position:absolute;left:1600px;top:164px;width:1px;height:612px;background:#dadce0"></div>
<div style="position:absolute;left:1602px;top:166px;width:10px;height:29px;border-radius:5px;background:#dadce0"></div>
<div style="position:absolute;left:1601px;top:729.5px;width:12px;height:33px;background:#f8f9fa;border-top:1px solid #e8eaed"></div>
<svg style="position:absolute;left:1601px;top:730px" width="12" height="33" viewBox="0 0 12 33"><path d="M3.5 9l2.5-2.8 2.5 2.8z" fill="#9aa0a6"/><path d="M3.5 24l2.5 2.8 2.5-2.8z" fill="#9aa0a6"/><rect x="0" y="16" width="12" height="1" fill="#e8eaed"/></svg>
<div style="position:absolute;left:50px;top:764px;width:1551px;height:12px;background:#fff"></div>
<div style="position:absolute;left:0;top:764px;width:49.5px;height:12px;background:#f8f9fa"></div>
<div style="position:absolute;left:51px;top:765px;width:625px;height:10px;border-radius:5px;background:#dadce0"></div>
<div style="position:absolute;left:1568px;top:764px;width:45px;height:12px;background:#f8f9fa"></div>
<svg style="position:absolute;left:1568px;top:764px" width="45" height="12" viewBox="0 0 45 12"><rect x="16" y="0" width="1" height="12" fill="#e8eaed"/><rect x="33" y="0" width="1" height="12" fill="#e8eaed"/><path d="M9.5 3.5l-3 2.5 3 2.5z" fill="#9aa0a6"/><path d="M23.5 3.5l3 2.5-3 2.5z" fill="#9aa0a6"/></svg>
<div style="position:absolute;left:0;top:776px;width:1613px;height:42px;background:#f1f3f4"></div>
<div style="position:absolute;left:0;top:775.5px;width:1613px;height:1px;background:#e8eaed"></div>
<svg style="position:absolute;left:50px;top:788px" width="60" height="18" viewBox="50 788 60 18"><g fill="#5f6368">
<path d="M58.8 791h2.2v4.9h4.9v2.2H61v4.9h-2.2v-4.9h-4.9v-2.2h4.9z"/>
<path d="M87 791.5h13v1.8H87zM87 794.8h13v1.8H87zM87 798.1h13v1.8H87zM87 801.4h13v1.8H87z"/>
</g></svg>
<div style="position:absolute;left:125px;top:776px;width:267px;height:42px;background:#fff;box-shadow:0 1px 3px 1px rgba(60,64,67,.15)"></div>
<div class="t" style="left:142.5px;top:788.63px;font-size:16.5px;line-height:16.5px;color:#188038;letter-spacing:0px;-webkit-text-stroke:0.3px #188038">Enhanced E-commerce AMP</div>
<svg style="position:absolute;left:365px;top:794px" width="9" height="6" viewBox="0 0 9 6"><path d="M0.5 0.5h8l-4 5z" fill="#188038"/></svg>
<div style="position:absolute;left:1499.5px;top:776px;width:113.5px;height:42px;background:#fff;border-left:1px solid #dadce0"></div>
<svg style="position:absolute;left:1511px;top:786px" width="22" height="23" viewBox="0 0 22 23">
<path d="M2.5 0.5h17a2 2 0 0 1 2 2v15.5a2 2 0 0 1-2 2h-6l-2.5 2.8-2.5-2.8h-6a2 2 0 0 1-2-2V2.5a2 2 0 0 1 2-2z" fill="#0f9d58"/>
<path d="M11 4.2q.8 4.8 5.8 5.8q-5 1-5.8 5.8q-.8-4.8-5.8-5.8q5-1 5.8-5.8z" fill="#fff"/>
</svg>
<div class="t" style="left:1547px;top:790.55px;font-size:14px;line-height:14px;color:#0f9d58;letter-spacing:-0.5px">Explore</div>
<div style="position:absolute;left:1613px;top:69px;width:57px;height:749px;background:#fff"></div>
<div style="position:absolute;left:1613px;top:69px;width:1px;height:749px;background:#dadce0"></div>
<svg style="position:absolute;left:1634px;top:89px" width="22" height="22" viewBox="0 0 22 22">
<path d="M2.5 1h14.5v4H5v12H1V2.5A1.5 1.5 0 0 1 2.5 1z" fill="#4285f4"/>
<path d="M17 1h2.5A1.5 1.5 0 0 1 21 2.5V5h-4z" fill="#1967d2"/>
<path d="M17 5h4v11.5h-4z" fill="#fbbc04"/>
<path d="M5 16.5h12v4H5z" fill="#34a853"/>
<path d="M1 16.5h4v4H2.5A1.5 1.5 0 0 1 1 19z" fill="#188038"/>
<path d="M17 16.5h4l-4 4z" fill="#ea4335"/>
<rect x="5" y="5" width="12" height="11.5" fill="#fff"/>
<text x="11" y="14.3" font-family="Liberation Sans" font-size="8.5" font-weight="bold" fill="#4285f4" text-anchor="middle">31</text>
</svg>
<svg style="position:absolute;left:1634px;top:150px" width="22" height="22" viewBox="0 0 22 22">
<rect x="1" y="1" width="20.5" height="20.5" rx="2" fill="#fbbc04"/>
<circle cx="11.2" cy="9.5" r="4" fill="#fff"/><rect x="9.2" y="13.6" width="4" height="1.6" fill="#fff"/>
</svg>
<svg style="position:absolute;left:1634px;top:210px" width="22" height="22" viewBox="0 0 22 22">
<circle cx="11" cy="11" r="10.3" fill="#4285f4"/>
<path d="M7.5 15.5L16 7" stroke="#fff" stroke-width="2.6" stroke-linecap="round"/>
<circle cx="6.3" cy="11.3" r="1.8" fill="#fbbc04"/>
</svg>
<svg style="position:absolute;left:1638px;top:783px" width="14" height="16" viewBox="0 0 14 16"><path d="M3.5 2.2l1.4-1.4 6.6 6.6-6.6 6.6-1.4-1.4 5.2-5.2z" fill="#5f6368"/></svg>
</div>
</body></html>
